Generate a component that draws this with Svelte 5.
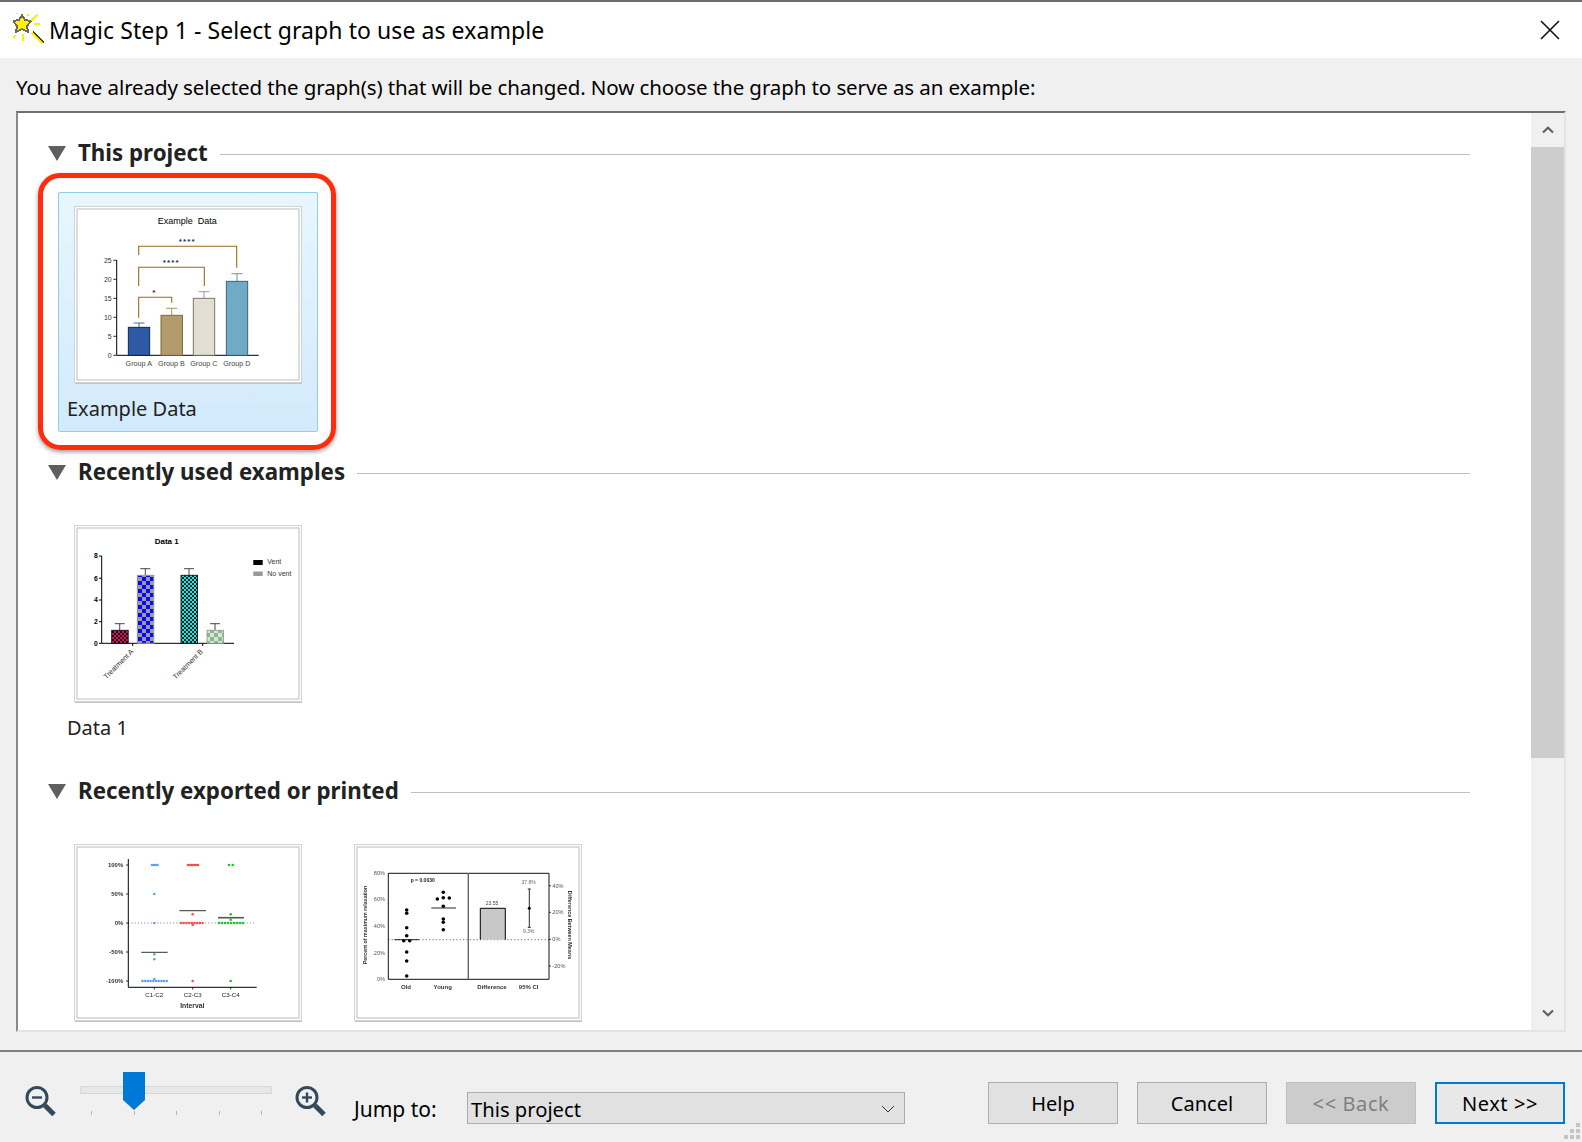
<script lang="ts">
	const dots = (xs: number[], y: number) => xs.map((x) => ({ x, y }));
	const range = (from: number, to: number, step: number) => {
		const out: number[] = [];
		for (let x = from; x <= to; x += step) out.push(x);
		return out;
	};

	const exampleBars = [
		{ x: 54.3, top: 121.3, fill: '#2e5aa5', line: '#0b1c3a', err: 117, name: 'Group A' },
		{ x: 87, top: 109.3, fill: '#b39b6e', line: '#75602f', err: 102.3, name: 'Group B' },
		{ x: 119.3, top: 92.3, fill: '#e2ded2', line: '#6e6b60', err: 85.7, name: 'Group C' },
		{ x: 152.3, top: 75.3, fill: '#6fabc6', line: '#2c5a6c', err: 67.7, name: 'Group D' },
	];
	const exampleTicks = [['25', 54.3], ['20', 73.3], ['15', 92.3], ['10', 111.3], ['5', 130.3], ['0', 149.3]] as const;

	const data1Bars = [
		{ x: 37.7, top: 105.3, fill: 'url(#crimson)', line: '#111' },
		{ x: 63.3, top: 50.3, fill: 'url(#blue)', line: '#999' },
		{ x: 107, top: 50.3, fill: 'url(#teal)', line: '#111' },
		{ x: 133, top: 105.3, fill: 'url(#mint)', line: '#999' },
	];
	const data1Ticks = [['8', 31], ['6', 53.3], ['4', 75], ['2', 96.7], ['0', 118.3]] as const;

	const scatterGroups = [
		{
			color: '#5aa0ff',
			pts: [
				...dots([78, 80, 82, 83.5], 27), ...dots([80.3], 56), ...dots([80.3], 85),
				...dots([80.3], 116.3), ...dots([80.3], 121.3),
				...dots(range(68.5, 93, 2.7), 143), ...dots([80.3], 141),
			],
		},
		{
			color: '#ff4d4d',
			pts: [
				...dots(range(114, 124, 2), 27), ...dots([118.7], 76.3),
				...dots(range(107, 131, 2.7), 85), ...dots([118.7], 87), ...dots([118.7], 143),
			],
		},
		{
			color: '#19c32d',
			pts: [
				...dots([155, 158.7], 27), ...dots([156.7], 76.3), ...dots([156.7], 81.7),
				...dots(range(145, 169.5, 3), 85), ...dots([156.7], 143),
			],
		},
	];
	const scatterTicks = [['100%', 27], ['50%', 56], ['0%', 85], ['-50%', 114], ['-100%', 143]] as const;
	const intervals = [['C1-C2', 80.3], ['C2-C3', 118.7], ['C3-C4', 156.7]] as const;

	const pairedDots = [
		[52.7, 72], [52.7, 75.3], [52.7, 89.7], [52.7, 97.7], [52.7, 114], [52.7, 123], [52.7, 138],
		[49.7, 102.7], [55.7, 102.7],
		[89.3, 54.3], [89.3, 59.7], [89.3, 68.3], [89.3, 81], [89.3, 84.3], [89.3, 91.7],
		[83.3, 61], [95.3, 60],
	];
	const leftPct = [['80%', 35.3], ['60%', 61.3], ['40%', 88], ['20%', 114.7], ['0%', 141.3]] as const;
	const rightPct = [['40%', 47.7], ['20%', 74.3], ['0%', 101.3], ['-20%', 128]] as const;
	const pairedLabels = [['Old', 52], ['Young', 88.7], ['Difference', 138], ['95% CI', 174.7]] as const;

	const sliderTicks = [0, 1, 2, 3, 4];
</script>

{#snippet frame()}
	<rect x="0.5" y="0.5" width="227" height="176" fill="#fff" stroke="#cfd3d6" />
	<rect x="3" y="3" width="222" height="171" fill="#fff" stroke="#b9bcbe" />
	<path d="M1 177.5H228" stroke="#c4c4c4" />
{/snippet}

{#snippet zoomIcon(plus: boolean)}
	<svg class="zoom-icon" width="32" height="32" viewBox="0 0 32 32">
		<circle cx="12" cy="11.5" r="10" fill="none" stroke="#34495e" stroke-width="3" />
		<path d="M20 19.5L29 28.5" stroke="#34495e" stroke-width="5" />
		<path d="M7 11.5H17" stroke="#34495e" stroke-width="2.4" />
		{#if plus}
			<path d="M12 6.5V16.5" stroke="#34495e" stroke-width="2.4" />
		{/if}
	</svg>
{/snippet}

<div class="dialog">
	<div class="parent-edge"></div>

	<header class="titlebar">
		<svg class="wand" width="32" height="34" viewBox="0 0 32 34" shape-rendering="crispEdges">
			<path d="M20 19L31 30" stroke="#3a3a2a" stroke-width="2" />
			<path d="M19 20L30 31" stroke="#ffee00" stroke-width="1.5" />
			<path d="M9 2L12 7L18 8L14 13L15 19L9 16L3 19L4 13L0 8L6 7Z" fill="#fff200" stroke="#6b6b55" stroke-width="2" />
			<path d="M24 2L18 8M21 11H27M10 21V28M2 22L1 25M15 1V3M4 0V1" stroke="#fff200" stroke-width="2" fill="none" />
		</svg>
		<h1>Magic Step 1 - Select graph to use as example</h1>
		<svg class="close" width="20" height="20" viewBox="0 0 20 20">
			<path d="M1 1L19 19M19 1L1 19" stroke="#111" stroke-width="1.6" />
		</svg>
	</header>

	<p class="intro">You have already selected the graph(s) that will be changed. Now choose the graph to serve as an example:</p>

	<div class="panel">
		<div class="list">
			<section>
				<div class="section-head">
					<span class="caret"></span>
					<h2>This project</h2>
					<span class="rule"></span>
				</div>
				<div class="cards">
					<div class="card selected">
						<div class="annotation"></div>
						<svg class="thumb" width="228" height="178" viewBox="0 0 228 178">
							{@render frame()}
							<text x="113.3" y="17.5" class="t" font-size="9" text-anchor="middle" xml:space="preserve">Example  Data</text>
							<path d="M42.7 54V149.3H184.7" fill="none" stroke="#000" stroke-width="1" />
							{#each exampleTicks as [label, y]}
								<path d="M39.3 {y}H42.7" stroke="#000" stroke-width="0.8" />
								<text x="37.7" y={y + 2.4} class="t" font-size="7" fill="#333" text-anchor="end">{label}</text>
							{/each}
							{#each exampleBars as bar}
								<path d="M{bar.x + 10.7} {bar.top}V{bar.err}M{bar.x + 5.2} {bar.err}H{bar.x + 16.2}" stroke={bar.line} stroke-width="0.9" opacity="0.75" />
								<rect x={bar.x} y={bar.top} width="21.4" height={149.3 - bar.top} fill={bar.fill} stroke={bar.line} stroke-width="0.9" />
								<text x={bar.x + 10.5} y="159.6" class="t" font-size="7.2" fill="#444" text-anchor="middle">{bar.name}</text>
							{/each}
							<g fill="none" stroke="#9a6a1c" stroke-width="1.1">
								<path d="M64.7 111.7V91.3H97.7V96.7" />
								<path d="M64.7 80V61.3H130.3V80" />
								<path d="M64.7 49V40.3H162.7V61.7" />
							</g>
							<text x="80.3" y="89" class="t stars" font-size="8" text-anchor="middle">*</text>
							<text x="97.3" y="59" class="t stars" font-size="8" text-anchor="middle">****</text>
							<text x="113.3" y="38" class="t stars" font-size="8" text-anchor="middle">****</text>
						</svg>
						<span class="card-name">Example Data</span>
					</div>
				</div>
			</section>

			<section>
				<div class="section-head">
					<span class="caret"></span>
					<h2>Recently used examples</h2>
					<span class="rule"></span>
				</div>
				<div class="cards">
					<div class="card">
						<svg class="thumb" width="228" height="178" viewBox="0 0 228 178">
							<defs>
								<pattern id="crimson" width="4" height="4" patternUnits="userSpaceOnUse">
									<rect width="4" height="4" fill="#d8115f" />
									<path d="M0 0h2v2H0zM2 2h2v2H2z" fill="#1a0510" />
								</pattern>
								<pattern id="blue" width="8" height="8" patternUnits="userSpaceOnUse">
									<rect width="8" height="8" fill="#9c9ca8" />
									<path d="M0 0h4v4H0zM4 4h4v4H4z" fill="#0a0aee" />
								</pattern>
								<pattern id="teal" width="4" height="4" patternUnits="userSpaceOnUse">
									<rect width="4" height="4" fill="#1de6e0" />
									<path d="M0 0h2v2H0zM2 2h2v2H2z" fill="#06201f" />
								</pattern>
								<pattern id="mint" width="8" height="8" patternUnits="userSpaceOnUse">
									<rect width="8" height="8" fill="#c2f5c4" />
									<path d="M0 0h4v4H0zM4 4h4v4H4z" fill="#a0a8a0" />
								</pattern>
							</defs>
							{@render frame()}
							<text x="92.7" y="18.6" class="t bold" font-size="8" text-anchor="middle">Data 1</text>
							<path d="M27.7 31V118.3H160M58.7 118.3V121M128.7 118.3V121" fill="none" stroke="#000" stroke-width="1" />
							{#each data1Ticks as [label, y]}
								<path d="M25 {y}H27.7" stroke="#000" stroke-width="1" />
								<text x="23.7" y={y + 2.4} class="t bold" font-size="6.8" text-anchor="end">{label}</text>
							{/each}
							{#each data1Bars as bar}
								{@const err = bar.top === 50.3 ? 43.7 : 98.7}
								<path d="M{bar.x + 8} {bar.top}V{err}M{bar.x + 3} {err}H{bar.x + 13}" stroke="#333" stroke-width="0.9" />
								<rect x={bar.x} y={bar.top} width="16.5" height={118.3 - bar.top} fill={bar.fill} stroke={bar.line} stroke-width="0.9" />
							{/each}
							<text transform="translate(60 127) rotate(-45)" class="t" font-size="7.2" fill="#333" text-anchor="end">Treatment A</text>
							<text transform="translate(129.5 127) rotate(-45)" class="t" font-size="7.2" fill="#333" text-anchor="end">Treatment B</text>
							<rect x="179.3" y="35" width="9.4" height="5" fill="#000" />
							<rect x="179.3" y="46.5" width="9.4" height="4.5" fill="#999" />
							<text x="193.3" y="39" class="t" font-size="7" fill="#333">Vent</text>
							<text x="193.3" y="50.7" class="t" font-size="7" fill="#333">No vent</text>
						</svg>
						<span class="card-name">Data 1</span>
					</div>
				</div>
			</section>

			<section>
				<div class="section-head">
					<span class="caret"></span>
					<h2>Recently exported or printed</h2>
					<span class="rule"></span>
				</div>
				<div class="cards">
					<div class="card">
						<svg class="thumb" width="228" height="178" viewBox="0 0 228 178">
							{@render frame()}
							<g class="soft" transform="translate(0 -6)">
								<path d="M54.3 85H181" stroke="#777" stroke-width="0.8" stroke-dasharray="1.2 2" />
								<path d="M54.3 21V149.3H182.7" fill="none" stroke="#000" stroke-width="1" />
								{#each scatterTicks as [label, y]}
									<path d="M52 {y}H54.3" stroke="#000" stroke-width="0.8" />
									<text x="49.3" y={y + 2} class="t bold" font-size="6" fill="#333" text-anchor="end">{label}</text>
								{/each}
								{#each intervals as [label, x]}
									<path d="M{x} 149.3V151.5" stroke="#000" stroke-width="0.8" />
									<text {x} y="159" class="t" font-size="6.2" fill="#222" text-anchor="middle">{label}</text>
								{/each}
								<text x="118.3" y="169.5" class="t bold" font-size="6.8" fill="#333" text-anchor="middle">Interval</text>
								{#each scatterGroups as group}
									{#each group.pts as p}
										<circle cx={p.x} cy={p.y} r="1.3" fill={group.color} />
									{/each}
								{/each}
								<path d="M67.3 114.3H93.7M105.3 72.7H132" stroke="#333" stroke-width="1" />
								<path d="M144 79.7H170" stroke="#555" stroke-width="1.6" />
							</g>
						</svg>
					</div>
					<div class="card">
						<svg class="thumb" width="228" height="178" viewBox="0 0 228 178">
							{@render frame()}
							<g class="soft" transform="translate(0 -6)">
								<path d="M34.3 101.7H195" stroke="#444" stroke-width="0.8" stroke-dasharray="1.2 2.2" />
								<path d="M195 35.3H34.3V141.3H195V35.3" fill="none" stroke="#111" stroke-width="1" />
								<path d="M114.3 35.3V141.3" stroke="#666" stroke-width="1.4" />
								{#each leftPct as [label, y]}
									<text x="31" y={y + 2} class="t" font-size="5.6" fill="#555" text-anchor="end">{label}</text>
								{/each}
								{#each rightPct as [label, y]}
									<path d="M195 {y}H197" stroke="#111" stroke-width="0.8" />
									<text x="198.3" y={y + 2} class="t" font-size="5.6" fill="#555">{label}</text>
								{/each}
								<text transform="translate(12.5 87) rotate(-90)" class="t bold" font-size="5.3" fill="#333" text-anchor="middle">Percent of maximum relaxation</text>
								<text transform="translate(214 87) rotate(90)" class="t bold" font-size="5.4" fill="#333" text-anchor="middle">Difference Between Means</text>
								<text x="68.7" y="44" class="t bold" font-size="5" fill="#222" text-anchor="middle">p = 0.0030</text>
								{#each pairedDots as [cx, cy]}
									<circle {cx} {cy} r="1.8" fill="#000" />
								{/each}
								<path d="M40.3 101.7H65M77.3 70H102" stroke="#111" stroke-width="0.9" />
								<path d="M126.3 101.7V70.3H151.3V101.7" fill="#c8c8c8" stroke="#000" stroke-width="1" />
								<text x="138" y="67" class="t" font-size="5" fill="#444" text-anchor="middle">23.55</text>
								<path d="M175.3 51V89.3M173.8 51H176.8M173.8 89.3H176.8" stroke="#111" stroke-width="0.9" />
								<circle cx="175.3" cy="70.3" r="1.5" fill="#000" />
								<text x="174.7" y="46" class="t" font-size="5" fill="#666" text-anchor="middle">37.8%</text>
								<text x="174.7" y="95" class="t" font-size="5" fill="#666" text-anchor="middle">9.3%</text>
								{#each pairedLabels as [label, x]}
									<text {x} y="150.5" class="t bold" font-size="6" fill="#333" text-anchor="middle">{label}</text>
								{/each}
							</g>
						</svg>
					</div>
				</div>
			</section>
		</div>

		<div class="scrollbar">
			<button class="arrow" aria-label="Scroll up">
				<svg width="12" height="8" viewBox="0 0 12 8"><path d="M1 6.5L6 1.8L11 6.5" fill="none" stroke="#606060" stroke-width="2.2" /></svg>
			</button>
			<div class="scroll-thumb"></div>
			<div class="scroll-rest"></div>
			<button class="arrow" aria-label="Scroll down">
				<svg width="12" height="8" viewBox="0 0 12 8"><path d="M1 1.5L6 6.2L11 1.5" fill="none" stroke="#606060" stroke-width="2.2" /></svg>
			</button>
		</div>
	</div>

	<footer class="footer">
		{@render zoomIcon(false)}
		<div class="slider">
			<div class="track"></div>
			<svg class="slider-thumb" width="22" height="38" viewBox="0 0 22 38"><path d="M0 0H22V28L11 38L0 28Z" fill="#0078d7" /></svg>
			<div class="ticks">
				{#each sliderTicks as tick (tick)}
					<span class="tick"></span>
				{/each}
			</div>
		</div>
		{@render zoomIcon(true)}
		<label class="jump" for="jump-to">Jump to:</label>
		<div class="combo" id="jump-to">
			<span>This project</span>
			<svg width="14" height="8" viewBox="0 0 14 8"><path d="M1 1L7 7L13 1" fill="none" stroke="#333" stroke-width="1" /></svg>
		</div>
		<div class="buttons">
			<button class="btn">Help</button>
			<button class="btn">Cancel</button>
			<button class="btn nav" disabled>&lt;&lt; Back</button>
			<button class="btn nav primary">Next &gt;&gt;</button>
		</div>
		<svg class="grip" width="16" height="16" viewBox="0 0 16 16">
			<path d="M12 0h4v4h-4zM6 6h4v4H6zM12 6h4v4h-4zM0 12h4v4H0zM6 12h4v4H6zM12 12h4v4h-4z" fill="#c4c4c4" />
		</svg>
	</footer>
</div>

<style>
	:global(body) {
		margin: 0;
		background: #f0f0f0;
	}
	.dialog {
		position: relative;
		display: flex;
		flex-direction: column;
		width: 1582px;
		height: 1142px;
		overflow: hidden;
		background: #f0f0f0;
		color: #000;
		font-family: 'Noto Sans', 'Open Sans', sans-serif;
	}
	.parent-edge {
		height: 2px;
		background: #6d6d6d;
	}
	.titlebar {
		display: flex;
		align-items: center;
		height: 56px;
		padding: 0 22px 0 13px;
		background: #fff;
	}
	.wand {
		margin-right: 4px;
	}
	h1 {
		flex: 1;
		margin: 0;
		font-size: 23px;
		font-weight: 400;
		letter-spacing: 0.07px;
	}
	.intro {
		height: 53px;
		margin: 0;
		padding-left: 16px;
		font-size: 20.5px;
		letter-spacing: -0.1px;
		line-height: 58px;
	}
	.panel {
		display: flex;
		height: 921px;
		margin: 0 16px;
		border-top: 2px solid #707070;
		border-left: 2px solid #8a8a8a;
		border-right: 2px solid #e4e4e4;
		border-bottom: 2px solid #e4e4e4;
		box-sizing: border-box;
		background: #fff;
	}
	.list {
		flex: 1;
		min-width: 0;
		padding: 21px 61px 0 30px;
		overflow: hidden;
	}
	section {
		height: 319px;
	}
	.section-head {
		display: flex;
		align-items: center;
		height: 40px;
	}
	.caret {
		width: 0;
		height: 0;
		margin: 0 12px 2px 0;
		border-left: 9px solid transparent;
		border-right: 9px solid transparent;
		border-top: 15px solid #5f5f5f;
	}
	h2 {
		margin: 0 12px 0 0;
		padding-bottom: 3px;
		font-size: 22.3px;
		font-weight: 700;
		color: #222;
	}
	.rule {
		flex: 1;
		height: 1px;
		background: #c0c0c0;
	}
	.cards {
		display: flex;
		gap: 20px;
		margin: 18px 0 0 10px;
	}
	.card {
		position: relative;
		box-sizing: border-box;
		width: 260px;
		height: 240px;
		padding: 13px 15px 0;
		border: 1px solid transparent;
		border-radius: 2px;
	}
	.card.selected {
		border-color: #8fd0ef;
		background: linear-gradient(#e8f6fe, #d2eafc);
	}
	.annotation {
		position: absolute;
		inset: -20px -19px -19px -21px;
		border: 5px solid #ff2d0e;
		border-radius: 22px;
		box-shadow: 0 2px 4px rgba(0, 0, 0, 0.4);
		pointer-events: none;
	}
	.thumb {
		display: block;
	}
	.soft {
		filter: blur(0.3px);
	}
	.t {
		font-family: 'Liberation Sans', Arial, sans-serif;
	}
	.bold {
		font-weight: 700;
	}
	.stars {
		fill: #1c2d55;
		font-weight: 700;
		letter-spacing: 1.2px;
	}
	.card-name {
		display: block;
		margin: 11px 0 0 -7px;
		font-size: 20px;
		color: #222;
	}
	.scrollbar {
		display: flex;
		flex-direction: column;
		width: 33px;
		background: #f0f0f0;
	}
	.arrow {
		display: flex;
		align-items: center;
		justify-content: center;
		height: 34px;
		padding: 0;
		border: 0;
		background: transparent;
	}
	.scroll-thumb {
		height: 611px;
		background: #cdcdcd;
	}
	.scroll-rest {
		flex: 1;
	}
	.footer {
		position: relative;
		display: flex;
		align-items: flex-end;
		flex: 1;
		margin-top: 18px;
		padding: 0 17px 18px 25px;
		border-top: 2px solid #7f7f7f;
	}
	.zoom-icon {
		margin-bottom: 6px;
	}
	.slider {
		position: relative;
		width: 192px;
		height: 44px;
		margin: 0 23px 8px 23px;
	}
	.track {
		box-sizing: border-box;
		height: 8px;
		margin-top: 14px;
		border: 1px solid #d8d8d8;
		background: #e6e8e8;
	}
	.slider-thumb {
		position: absolute;
		top: 0;
		left: 43px;
	}
	.ticks {
		display: flex;
		justify-content: space-between;
		margin: 17px 10px 0 11px;
	}
	.tick {
		width: 1px;
		height: 4px;
		background: #b5b5b5;
	}
	.jump {
		margin: 0 0 1px 27px;
		width: 113px;
		font-size: 21px;
	}
	.combo {
		display: flex;
		align-items: center;
		justify-content: space-between;
		box-sizing: border-box;
		width: 438px;
		height: 32px;
		padding: 2px 9px 0 3px;
		border: 1px solid #adadad;
		background: #e1e1e1;
		font-size: 20.2px;
	}
	.buttons {
		display: flex;
		gap: 19px;
		margin-left: auto;
	}
	.btn {
		box-sizing: border-box;
		width: 130px;
		height: 42px;
		padding: 0;
		border: 1px solid #adadad;
		background: #e1e1e1;
		color: #000;
		font: inherit;
		font-size: 20px;
	}
	.btn.nav {
		letter-spacing: 0.6px;
	}
	.btn:disabled {
		border-color: #bfbfbf;
		background: #cccccc;
		color: #7f7f7f;
	}
	.btn.primary {
		border: 2px solid #0078d7;
		background: #e8e8e8;
	}
	.grip {
		position: absolute;
		right: 2px;
		bottom: 3px;
	}
</style>
